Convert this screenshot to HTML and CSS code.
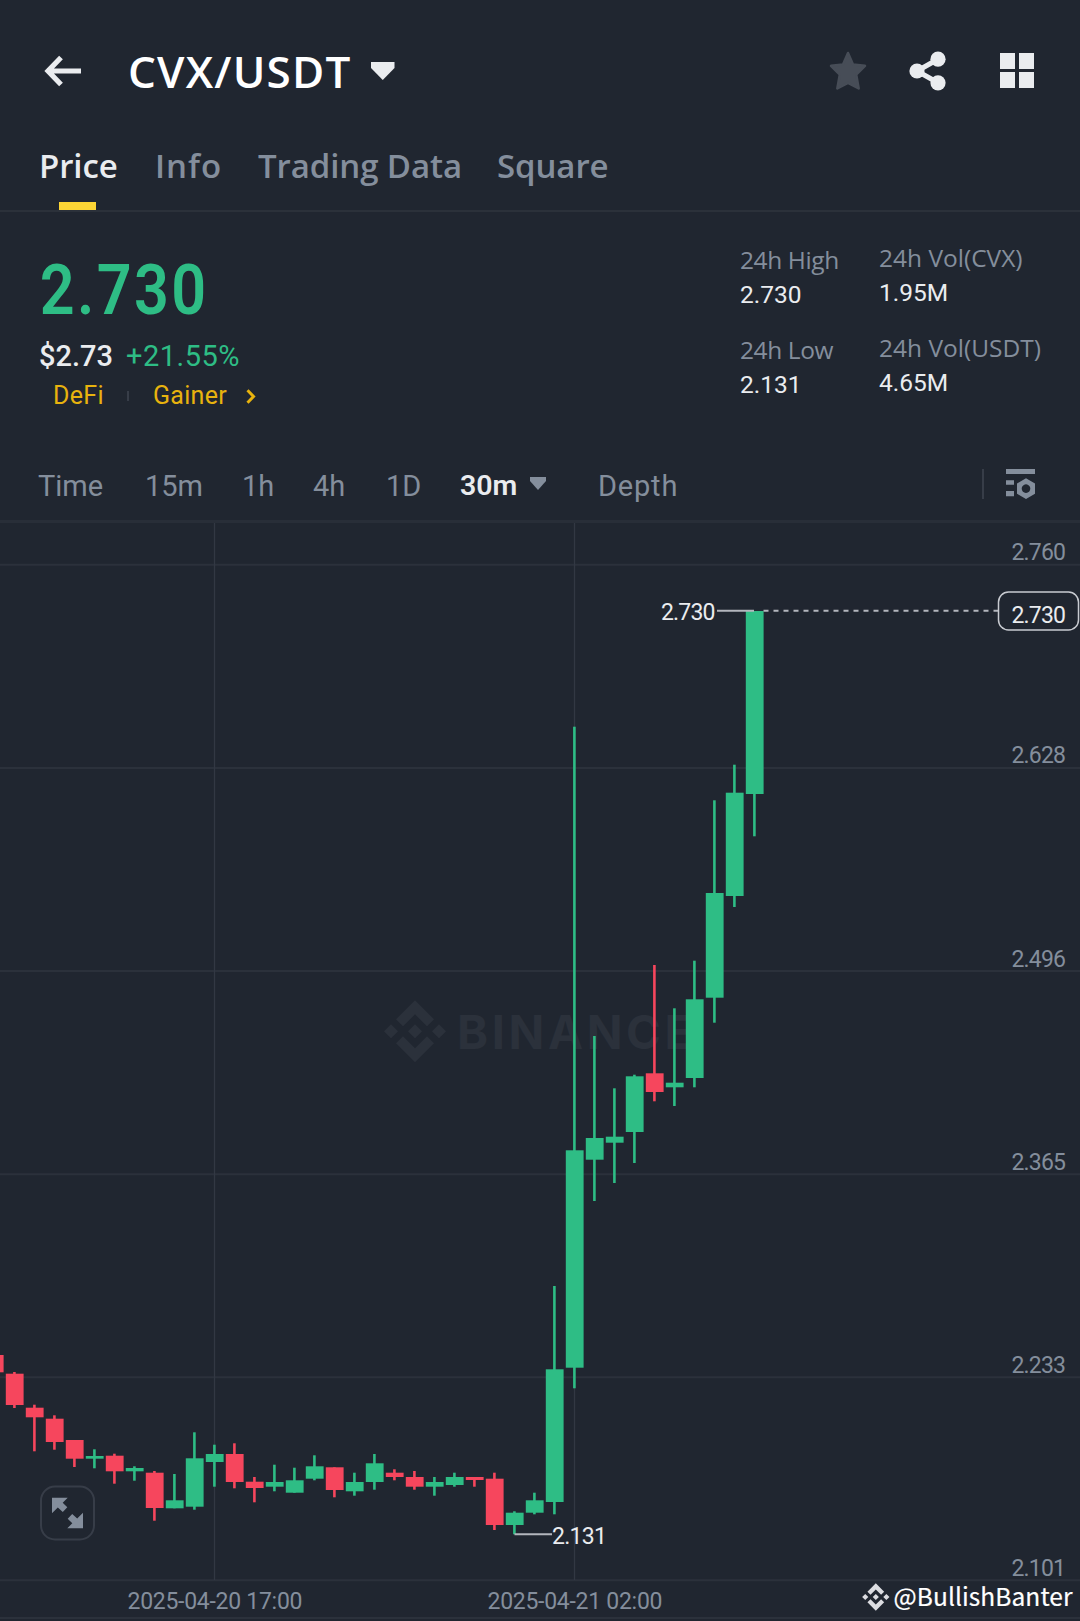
FILE: index.html
```html
<!DOCTYPE html>
<html lang="en">
<head>
  <meta charset="UTF-8">
  <title>CVX/USDT</title>
  <link rel="stylesheet" href="styles.css">
</head>
<body>

  <!-- Header -->
  <div id="header">
    <svg class="back" width="38" height="32" viewBox="0 0 38 32">
      <path d="M37 16H4M17 2.500L4 16l13 13.500" fill="none" stroke="#eaecef" stroke-width="5.200"/>
    </svg>
    <h1>CVX/USDT</h1>
    <svg class="caret" width="24" height="18" viewBox="0 0 24 18">
      <path d="M0 0h23.500v6L11.750 18 0 6z" fill="#eaecef"/>
    </svg>
    <div class="actions">
      <svg width="38" height="40" viewBox="0 0 38 40">
        <path d="M19 2l5 11.500 12 1.300-8.800 8.700 2.500 14L19 31.800 8.300 37.500l2.500-14L2 14.800l12-1.300z" fill="#474d57" stroke="#474d57" stroke-width="2.500" stroke-linejoin="round"/>
      </svg>
      <svg width="37" height="40" viewBox="0 0 37 40">
        <path d="M29 8.200L8 20l21 11.800" fill="none" stroke="#eaecef" stroke-width="5"/>
        <circle cx="8" cy="20" r="7.600" fill="#eaecef"/>
        <circle cx="29" cy="8.200" r="7.600" fill="#eaecef"/>
        <circle cx="29" cy="31.800" r="7.600" fill="#eaecef"/>
      </svg>
      <svg width="34" height="35" viewBox="0 0 34 35">
        <path d="M0 0h15v16H0zM19 0h15v16H19zM0 19h15v16H0zM19 19h15v16H19z" fill="#eaecef"/>
      </svg>
    </div>
  </div>

  <!-- Tabs -->
  <div id="tabs">
    <a class="active">Price</a>
    <a class="info">Info</a>
    <a>Trading Data</a>
    <a>Square</a>
  </div>

  <!-- Price summary -->
  <div id="summary">
    <div class="price-box">
      <div class="last-price">2.730</div>
      <div class="change"><span class="fiat">$2.73</span><span class="percent">+21.55%</span></div>
      <div class="tags">
        <span class="tag-defi">DeFi</span>
        <i></i>
        <span class="tag-gainer">Gainer</span>
        <svg width="10" height="15" viewBox="0 0 10 15">
          <path d="M1.500 1.300l6 6.200-6 6.200" fill="none" stroke="#e8b30e" stroke-width="3"/>
        </svg>
      </div>
    </div>
    <div class="stats">
      <div class="label">24h High</div>
      <div class="value">2.730</div>
      <div class="label">24h Low</div>
      <div class="value">2.131</div>
    </div>
    <div class="stats volume">
      <div class="label">24h Vol(CVX)</div>
      <div class="value">1.95M</div>
      <div class="label">24h Vol(USDT)</div>
      <div class="value">4.65M</div>
    </div>
  </div>

  <!-- Intervals -->
  <div id="intervals">
    <span>Time</span>
    <span>15m</span>
    <span>1h</span>
    <span>4h</span>
    <span>1D</span>
    <span class="active">30m</span>
    <svg width="16" height="13" viewBox="0 0 16 13">
      <path d="M0 0h16v4L8 13 0 4z" fill="#848e9c"/>
    </svg>
    <span class="depth">Depth</span>
    <i></i>
    <svg width="29" height="31" viewBox="0 0 29 31">
      <path d="M0 1h29v5H0zM0 12.300h8v4.500H0zM0 23h8v5.200H0z" fill="#848e9c"/>
      <path d="M20 10.300l9 5.200v10.300l-9 5.200-9-5.200V15.500z M20 16.300a4.300 4.300 0 1 0 .01 0z" fill="#848e9c" fill-rule="evenodd"/>
    </svg>
  </div>

  <!-- Candlestick chart -->
  <svg id="chart" width="1080" height="1098" viewBox="0 523 1080 1098">
    <g id="grid" fill="none" stroke="#2b313b" stroke-width="2">
      <path d="M0 564.700H1080M0 768H1080M0 971H1080M0 1174.300H1080M0 1377.300H1080M0 1580.300H1080M0 1618H1080"/>
      <path d="M214.500 523V1580M574.500 523V1580" stroke="#323843" stroke-width="1.300"/>
    </g>

    <g fill="#2b313b">
      <g transform="translate(415 1031.300) scale(.5)">
        <path id="logo" d="M0-62l38 38-14 14L0-34l-24 24-14-14zM0 62l38-38-14-14L0 34l-24-24-14 14zM0-14L14 0 0 14-14 0zM-48-14l14 14-14 14L-62 0zM48-14L62 0 48 14 34 0z"/>
      </g>
      <text class="brand" x="457" y="1048.700" textLength="236">BINANCE</text>
    </g>

    <g id="candles"></g>

    <g class="axis">
      <text x="1011.500" y="559.700" textLength="54.500">2.760</text>
      <text x="1011.500" y="762.700" textLength="54.500">2.628</text>
      <text x="1011.500" y="966.500" textLength="54.500">2.496</text>
      <text x="1011.500" y="1169.600" textLength="54.500">2.365</text>
      <text x="1011.500" y="1372.600" textLength="54.500">2.233</text>
      <text x="1011.500" y="1575.700" textLength="54.500">2.101</text>
      <text x="127.500" y="1608.700" textLength="175">2025-04-20 17:00</text>
      <text x="487.500" y="1608.700" textLength="175">2025-04-21 02:00</text>
    </g>

    <!-- Last price, high and low marks -->
    <path d="M717 610.800H754M514.500 1534.300H552" stroke="#b3b6bd" stroke-width="2"/>
    <path d="M763.500 610.800H998" stroke="#b3b6bd" stroke-width="2" stroke-dasharray="5 5"/>
    <rect x="998.500" y="592" width="80" height="38" rx="10" fill="#202630" stroke="#c8cbd1" stroke-width="1.500"/>
    <g class="mark">
      <text x="661" y="619.700" textLength="54.500">2.730</text>
      <text x="1011.500" y="622.500" textLength="54.500">2.730</text>
      <text x="552" y="1544" textLength="55">2.131</text>
    </g>

    <!-- Full screen button -->
    <rect x="41" y="1486.500" width="53" height="53" rx="14" fill="#202630" stroke="#373d48" stroke-width="2"/>
    <path d="M52 1497.700h15.700l-5 5 4.600 4.600-4.500 4.700-5-4.600-5.800 5.800zM83 1528.300h-15.700l5-5-4.600-4.600 4.500-4.700 5 4.600 5.800-5.800z" fill="#848e9c"/>

    <!-- Handle -->
    <g transform="translate(875.800 1597) scale(.22)" fill="#dcdde1">
      <use href="#logo"/>
    </g>
    <text class="handle" x="893.500" y="1606" textLength="179">@BullishBanter</text>
  </svg>

  <script>
    // [high, body top, body bottom, low, up]
    var candles = [
      [1355, 1355, 1372.3, 1372.3, 0],
      [1372, 1373.7, 1405, 1408, 0],
      [1404.7, 1407.7, 1417.3, 1451.3, 0],
      [1415.3, 1418.7, 1442, 1449.7, 0],
      [1440, 1440, 1458.7, 1467, 0],
      [1449.3, 1456, 1458.7, 1468.3, 1],
      [1453.7, 1455.7, 1471.3, 1483.7, 0],
      [1466.3, 1468, 1471.3, 1480.7, 1],
      [1471, 1472.7, 1508, 1520.7, 0],
      [1474, 1500.3, 1508.3, 1508.3, 1],
      [1432.3, 1458.3, 1506.7, 1509.7, 1],
      [1444.7, 1454, 1462, 1486.7, 1],
      [1443.3, 1454, 1482, 1488.3, 0],
      [1477, 1481.7, 1488, 1502.3, 0],
      [1464.7, 1482, 1486.7, 1491.3, 1],
      [1467.7, 1480.3, 1492.7, 1492.7, 1],
      [1455.3, 1466.3, 1478.7, 1480.3, 1],
      [1467.3, 1467.3, 1490, 1497.3, 0],
      [1472.7, 1482, 1491.3, 1495.7, 1],
      [1454, 1463.3, 1482, 1489.7, 1],
      [1469.3, 1472.7, 1477, 1480.3, 0],
      [1471, 1477, 1486.7, 1489.7, 0],
      [1477, 1482, 1486.7, 1495.7, 1],
      [1472.7, 1477, 1485, 1486.7, 1],
      [1477, 1477, 1480, 1486.7, 0],
      [1472.7, 1478.7, 1525, 1530, 0],
      [1511.3, 1512.7, 1525, 1534.3, 1],
      [1492.7, 1500.3, 1512.7, 1514.3, 1],
      [1286, 1369.3, 1502, 1514.3, 1],
      [726.7, 1150.3, 1367.7, 1388.3, 1],
      [1036, 1138, 1159.7, 1201, 1],
      [1088.3, 1136.7, 1142.7, 1183, 1],
      [1074.7, 1076.3, 1132, 1163, 1],
      [965, 1073.3, 1092, 1101.3, 0],
      [1008.3, 1082.7, 1087.3, 1106, 1],
      [960.7, 999.3, 1078, 1087.3, 1],
      [800.3, 893, 997.7, 1022.7, 1],
      [764.7, 792.7, 896, 907, 1],
      [611, 611, 794, 836.3, 1]
    ];

    var out = "";
    candles.forEach(function(c, i) {
      var x = i * 20 - 5.6;
      out += '<g class="' + (c[4] ? "up" : "down") + '">' +
             '<rect x="' + (x - 1.3) + '" y="' + c[0] + '" width="2.6" height="' + (c[3] - c[0]) + '"/>' +
             '<rect x="' + (x - 8.6) + '" y="' + c[1] + '" width="17.8" height="' + (c[2] - c[1]) + '"/></g>';
    });
    document.getElementById("candles").innerHTML = out;
  </script>

</body>
</html>
```
FILE: styles.css
```css
body {
  margin: 0;
  width: 1080px;
  height: 1621px;
  overflow: hidden;
  background-color: #202630;
  color: #eaecef;
  font-family: "Open Sans", "Noto Sans", sans-serif;
}
svg {
  display: block;
  flex: none;
}
/* Header */
#header {
  display: flex;
  align-items: center;
  height: 141px;
  padding: 0 46px 0 44px;
}
#header h1 {
  width: 243px;
  margin: 0 0 0 46px;
  font-size: 44px;
  line-height: 60px;
  font-weight: 600;
  color: #fff;
  letter-spacing: 1.2px;
  white-space: nowrap;
}
.actions {
  display: flex;
  align-items: center;
  margin-left: auto;
}
.actions svg:nth-child(2) {
  margin: 0 54px 0 42px;
}
/* Tabs */
#tabs {
  display: grid;
  grid-template-columns: 78px 65px 201px 112px;
  column-gap: 38px;
  height: 69px;
  padding-left: 39px;
  border-bottom: 2px solid #2b313a;
  font-size: 33px;
  line-height: 49px;
  font-weight: 600;
  color: #848e9c;
  white-space: nowrap;
}
#tabs a {
  letter-spacing: -0.1px;
}
#tabs .info {
  letter-spacing: 1px;
}
#tabs .active {
  position: relative;
  color: #eaecef;
}
#tabs .active::after {
  content: "";
  position: absolute;
  left: 20px;
  bottom: 0;
  width: 37px;
  height: 8px;
  background-color: #fcd535;
}
/* Price summary */
#summary {
  display: flex;
  height: 238px;
  padding-left: 39px;
  box-sizing: border-box;
}
.price-box {
  width: 701px;
  padding-top: 38px;
  font-family: Roboto, sans-serif;
}
.last-price {
  padding-left: 1px;
  font-size: 71px;
  line-height: 80px;
  font-weight: 600;
  letter-spacing: 2.7px;
  color: #2ebd85;
  transform: scaleX(0.86);
  transform-origin: left;
}
.change {
  display: flex;
  margin-top: 6px;
  font-size: 29px;
  line-height: 41px;
  font-weight: 500;
}
.change .fiat {
  width: 87px;
}
.change .percent {
  color: #2ebd85;
  font-weight: 400;
  letter-spacing: 0.5px;
}
.tags {
  display: flex;
  align-items: center;
  margin-top: 4px;
  padding-left: 14px;
  font-size: 25px;
  line-height: 30px;
  letter-spacing: 0.3px;
  color: #e8b30e;
}
.tags i {
  width: 2px;
  height: 10px;
  background-color: #373d48;
}
.tag-defi {
  width: 74px;
}
.tag-gainer {
  width: 93px;
  margin-left: 24px;
}
.stats {
  width: 139px;
  padding-top: 30px;
  font-size: 24.5px;
  line-height: 35px;
  white-space: nowrap;
}
.stats .label {
  color: #848e9c;
  letter-spacing: -0.4px;
}
.stats .value {
  margin-bottom: 20px;
  padding-top: 1px;
  line-height: 34px;
  font-family: Roboto, sans-serif;
}
.stats.volume {
  padding-top: 28px;
}
.stats.volume .label {
  letter-spacing: 0;
}
/* Intervals */
#intervals {
  display: grid;
  grid-template-columns: 107px 97px 71px 73px 74px 70px 68px 384px 24px auto;
  align-items: center;
  height: 70px;
  padding-left: 38px;
  border-bottom: 3px solid #282e38;
  font-family: Roboto, sans-serif;
  font-size: 29px;
  line-height: 40px;
  color: #848e9c;
}
#intervals span {
  padding-top: 1px;
}
#intervals .depth {
  letter-spacing: 0.8px;
}
#intervals .active {
  font-size: 28.5px;
  font-weight: 600;
  color: #eaecef;
}
#intervals i {
  width: 2px;
  height: 30px;
  margin-bottom: 2px;
  background-color: #373d48;
}
#intervals svg {
  margin-bottom: 4px;
}
/* Chart */
#chart text {
  font-family: Roboto, sans-serif;
  font-size: 23px;
}
#chart .axis {
  fill: #848e9c;
}
#chart .mark {
  fill: #eaecef;
}
#chart .brand {
  font-family: Inter, sans-serif;
  font-size: 47px;
  font-weight: 700;
}
#chart .handle {
  font-family: "Noto Sans CJK SC", sans-serif;
  font-size: 24.5px;
  fill: #fff;
  stroke: #fff;
  stroke-width: 0.2px;
}
.up {
  fill: #2ebd85;
}
.down {
  fill: #f6465d;
}
```
